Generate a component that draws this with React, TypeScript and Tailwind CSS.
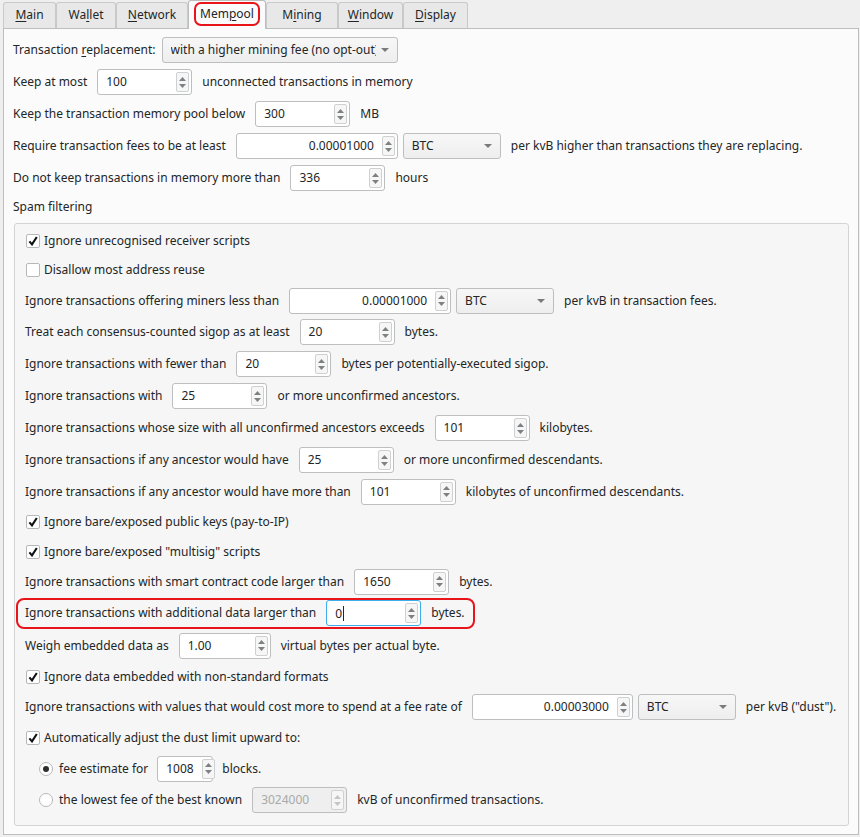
import React from 'react';

const font = { fontFamily: '"Noto Sans", "Open Sans", sans-serif' };

function Arrows({ dim }: { dim?: boolean }) {
  const c = dim ? '#c4c5c6' : '#7f8081';
  return (
    <div className="flex h-[20px] w-[13px] shrink-0 flex-col items-center justify-center gap-[3px] rounded-[2px] border border-[#cfd0d1] bg-[#f6f6f6]">
      <svg width="7" height="4" viewBox="0 0 7 4">
        <path d="M0 4 L3.5 0 L7 4 Z" fill={c} />
      </svg>
      <svg width="7" height="4" viewBox="0 0 7 4">
        <path d="M0 0 L3.5 4 L7 0 Z" fill={c} />
      </svg>
    </div>
  );
}

function Spin({
  value,
  w = 'w-[95px]',
  right,
  focus,
  disabled,
}: {
  value: string;
  w?: string;
  right?: boolean;
  focus?: boolean;
  disabled?: boolean;
}) {
  return (
    <div
      className={`flex h-[26px] shrink-0 items-center rounded-[3px] border pr-[2px] ${w} ${
        focus ? 'border-[#3daee9]' : 'border-[#bcbebf]'
      } ${disabled ? 'bg-[#efefef]' : 'bg-white'}`}
    >
      <div
        className={`flex-1 px-[8px] ${right ? 'text-right' : ''} ${disabled ? 'text-[#a8a9aa]' : 'text-[#232627]'}`}
      >
        {value}
        {focus && <span className="ml-[1px] inline-block h-[15px] w-px translate-y-[3px] bg-[#232627]" />}
      </div>
      <Arrows dim={disabled} />
    </div>
  );
}

function Combo({ text, w = 'w-[98px]' }: { text: string; w?: string }) {
  return (
    <div
      className={`flex h-[26px] shrink-0 items-center rounded-[3px] border border-[#bcbebf] bg-gradient-to-b from-[#f7f7f7] to-[#eeeeee] pl-[8px] pr-[8px] ${w}`}
    >
      <div className="flex-1 overflow-hidden whitespace-nowrap">{text}</div>
      <svg width="8" height="4" viewBox="0 0 8 4" className="ml-[5px] shrink-0">
        <path d="M0 0 L4 4 L8 0 Z" fill="#7a7b7c" />
      </svg>
    </div>
  );
}

// spin box followed by its unit combo, sitting a little closer together
function Amount({ value, w = 'w-[162px]' }: { value: string; w?: string }) {
  return (
    <div className="flex items-center gap-[5px]">
      <Spin value={value} w={w} right />
      <Combo text="BTC" />
    </div>
  );
}

function Check({ checked }: { checked?: boolean }) {
  return (
    <div className="flex h-[14px] w-[14px] shrink-0 items-center justify-center rounded-[2px] border border-[#b6b8b9] bg-white">
      {checked && (
        <svg width="10" height="10" viewBox="0 0 10 10">
          <path d="M1.4 5.4 L4 8.4 L8.8 1" fill="none" stroke="#111213" strokeWidth="2.1" />
        </svg>
      )}
    </div>
  );
}

function Radio({ on }: { on?: boolean }) {
  return (
    <div className="flex h-[14px] w-[14px] shrink-0 items-center justify-center rounded-full border border-[#b6b8b9] bg-white">
      {on && <div className="h-[6px] w-[6px] rounded-full bg-[#2c2d2e]" />}
    </div>
  );
}

function Row({ h, children, className = '' }: { h: string; children: React.ReactNode; className?: string }) {
  return <div className={`flex items-center gap-[10px] whitespace-nowrap ${h} ${className}`}>{children}</div>;
}

function CheckRow({ h, checked, label }: { h: string; checked?: boolean; label: string }) {
  return (
    <div className={`flex items-center gap-[4px] whitespace-nowrap pl-[11px] ${h}`}>
      <Check checked={checked} />
      <span>{label}</span>
    </div>
  );
}

const tabs = [
  { pre: '', u: 'M', post: 'ain', w: 'w-[53px]' },
  { pre: 'Wa', u: 'l', post: 'let', w: 'w-[60px]' },
  { pre: '', u: 'N', post: 'etwork', w: 'w-[72px]' },
  { pre: 'Mem', u: 'p', post: 'ool', w: 'w-[78px]', active: true },
  { pre: 'M', u: 'i', post: 'ning', w: 'w-[72px]' },
  { pre: '', u: 'W', post: 'indow', w: 'w-[65px]' },
  { pre: '', u: 'D', post: 'isplay', w: 'w-[65px]' },
];

export default function App() {
  return (
    <div className="h-[837px] w-[860px] overflow-hidden bg-[#efefef] text-[12px] text-[#232627]" style={font}>
      {/* tab bar */}
      <div className="flex h-[28px] items-end pl-[3px]">
        {tabs.map((t) =>
          t.active ? (
            <div
              key={t.u}
              className={`relative z-10 -mb-px flex h-[29px] items-center justify-center rounded-t-[3px] border border-b-0 border-[#bcbebf] bg-[#fbfbfb] pb-[2px] ${t.w}`}
            >
              <span className="rounded-[7px] border-2 border-[#e8141a] px-[4px] py-[1px]">
                {t.pre}
                <span className="underline underline-offset-2">{t.u}</span>
                {t.post}
              </span>
            </div>
          ) : (
            <div
              key={t.u}
              className={`flex h-[26px] items-center justify-center rounded-t-[3px] border border-b-0 border-[#c8c9ca] bg-[#e8e8e8] pb-[1px] ${t.w}`}
            >
              <span>
                {t.pre}
                <span className="underline underline-offset-2">{t.u}</span>
                {t.post}
              </span>
            </div>
          ),
        )}
      </div>

      {/* panel */}
      <div className="ml-[3px] mr-[1px] border border-[#bcbebf] bg-[#fbfbfb] pb-[8px] pl-[9px] pr-[9px] pt-[5px]">
        <Row h="h-[32px]">
          <span>
            Transaction <span className="underline underline-offset-2">r</span>eplacement:
          </span>
          <Combo text="with a higher mining fee (no opt-out)" w="w-[236px] ml-[-4px]" />
        </Row>
        <Row h="h-[32px]">
          <span>Keep at most</span>
          <Spin value="100" />
          <span>unconnected transactions in memory</span>
        </Row>
        <Row h="h-[32px]">
          <span>Keep the transaction memory pool below</span>
          <Spin value="300" />
          <span>MB</span>
        </Row>
        <Row h="h-[32px]">
          <span>Require transaction fees to be at least</span>
          <Amount value="0.00001000" />
          <span>per kvB higher than transactions they are replacing.</span>
        </Row>
        <Row h="h-[32px]">
          <span>Do not keep transactions in memory more than</span>
          <Spin value="336" />
          <span>hours</span>
        </Row>
        <Row h="h-[26px]">
          <span>Spam filtering</span>
        </Row>

        {/* spam filtering group */}
        <div className="ml-[1px] mt-[3px] rounded-[3px] border border-[#d3d4d5] bg-[#f6f6f6] pb-[9px] pt-[3px]">
          <CheckRow h="h-[28px]" checked label="Ignore unrecognised receiver scripts" />
          <CheckRow h="h-[30px]" label="Disallow most address reuse" />
          <Row h="h-[31px]" className="pl-[10px]">
            <span>Ignore transactions offering miners less than</span>
            <Amount value="0.00001000" />
            <span>per kvB in transaction fees.</span>
          </Row>
          <Row h="h-[32px]" className="pl-[10px]">
            <span>Treat each consensus-counted sigop as at least</span>
            <Spin value="20" />
            <span>bytes.</span>
          </Row>
          <Row h="h-[32px]" className="pl-[10px]">
            <span>Ignore transactions with fewer than</span>
            <Spin value="20" />
            <span>bytes per potentially-executed sigop.</span>
          </Row>
          <Row h="h-[32px]" className="pl-[10px]">
            <span>Ignore transactions with</span>
            <Spin value="25" />
            <span>or more unconfirmed ancestors.</span>
          </Row>
          <Row h="h-[32px]" className="pl-[10px]">
            <span>Ignore transactions whose size with all unconfirmed ancestors exceeds</span>
            <Spin value="101" />
            <span>kilobytes.</span>
          </Row>
          <Row h="h-[32px]" className="pl-[10px]">
            <span>Ignore transactions if any ancestor would have</span>
            <Spin value="25" />
            <span>or more unconfirmed descendants.</span>
          </Row>
          <Row h="h-[31px]" className="pl-[10px]">
            <span>Ignore transactions if any ancestor would have more than</span>
            <Spin value="101" />
            <span>kilobytes of unconfirmed descendants.</span>
          </Row>
          <CheckRow h="h-[30px]" checked label="Ignore bare/exposed public keys (pay-to-IP)" />
          <CheckRow h="h-[29px]" checked label={'Ignore bare/exposed "multisig" scripts'} />
          <Row h="h-[31px]" className="pl-[10px]">
            <span>Ignore transactions with smart contract code larger than</span>
            <Spin value="1650" />
            <span>bytes.</span>
          </Row>
          <div className="flex h-[32px] items-center pl-[1px]">
            <div className="flex h-[31px] items-center gap-[10px] whitespace-nowrap rounded-[8px] border-2 border-[#e8141a] pl-[7px] pr-[8px]">
              <span>Ignore transactions with additional data larger than</span>
              <Spin value="0" focus />
              <span>bytes.</span>
            </div>
          </div>
          <Row h="h-[33px]" className="pl-[10px]">
            <span>Weigh embedded data as</span>
            <Spin value="1.00" w="w-[92px]" />
            <span>virtual bytes per actual byte.</span>
          </Row>
          <CheckRow h="h-[30px]" checked label="Ignore data embedded with non-standard formats" />
          <Row h="h-[30px]" className="pl-[10px]">
            <span>Ignore transactions with values that would cost more to spend at a fee rate of</span>
            <Amount value="0.00003000" w="w-[161px]" />
            <span>per kvB ("dust").</span>
          </Row>
          <CheckRow h="h-[31px]" checked label="Automatically adjust the dust limit upward to:" />
          <div className="flex h-[31px] items-center whitespace-nowrap pl-[24px]">
            <Radio on />
            <span className="ml-[6px]">fee estimate for</span>
            <div className="ml-[9px]">
              <Spin value="1008" w="w-[56px]" />
            </div>
            <span className="ml-[9px]">blocks.</span>
          </div>
          <div className="flex h-[32px] items-center whitespace-nowrap pl-[24px]">
            <Radio />
            <span className="ml-[6px]">the lowest fee of the best known</span>
            <div className="ml-[10px]">
              <Spin value="3024000" w="w-[95px]" disabled />
            </div>
            <span className="ml-[10px]">kvB of unconfirmed transactions.</span>
          </div>
        </div>
      </div>
    </div>
  );
}
